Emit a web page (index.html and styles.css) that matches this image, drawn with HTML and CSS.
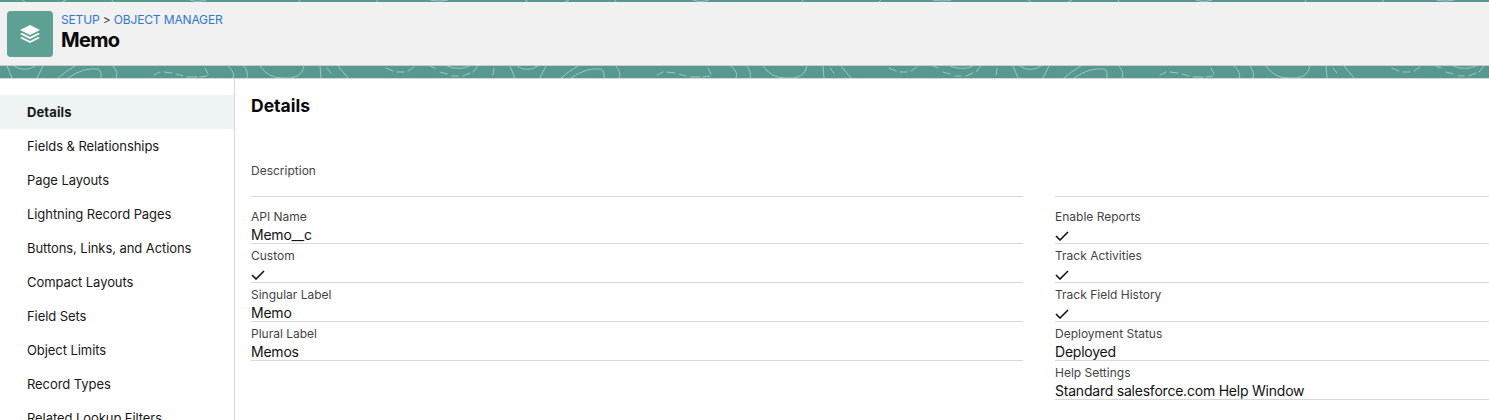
FILE: index.html
```html
<!DOCTYPE html>
<html lang="en">
<head>
  <meta charset="UTF-8">
  <meta name="viewport" content="width=device-width, initial-scale=1.0">
  <title>Memo | Object Manager</title>
  <link rel="stylesheet" href="styles.css">
</head>
<body>
  <!-- Header -->
  <header class="banner">
    <svg class="banner-art" width="100%" height="78" aria-hidden="true">
      <defs>
        <pattern id="swirls" width="503" height="78" patternUnits="userSpaceOnUse">
          <g fill="none" stroke="#a6cdc6" stroke-width="0.9" stroke-linecap="round">
            <path d="M7 66l5 12"/>
            <path d="M14 66q10 7 21 0"/>
            <path d="M43 66l-6 12"/>
            <path d="M58 78q8-7 17-12"/>
            <path d="M68 78q16-11 30-9q4 2 3 9"/>
            <path d="M113 66q6 7 3 12"/>
            <path d="M154 75l6-3"/>
            <path d="M164 72l8 1"/>
            <path d="M176 74l7 2"/>
            <path d="M187 77l10 0"/>
            <path d="M200 77l7-1"/>
            <path d="M205 68l3 6"/>
            <path d="M228 66q8 7 5 12"/>
            <path d="M244 66q5 7 3 12"/>
            <path d="M260 66q8 12 22 12q20 2 22-12"/>
            <path d="M320 66l1 12"/>
            <path d="M327 68l4 5"/>
            <path d="M338 66l10 12"/>
            <path d="M386 68l7 3"/>
            <path d="M397 72l7 0"/>
            <path d="M408 71l6-4"/>
            <path d="M430 66l5 2"/>
            <path d="M440 72l7 2"/>
            <path d="M452 76l6 0"/>
            <path d="M463 76l7-3"/>
            <path d="M473 72l5-6"/>
            <path d="M447 66q12 5 23 0"/>
            <path d="M494 68l-1 7"/>
            <path d="M22 0l3 2"/>
            <path d="M62 2l4-2"/>
            <path d="M112 0l1 2"/>
            <path d="M190 0q8 3 16 0"/>
            <path d="M300 0l-1 2"/>
            <path d="M376 2l2-2"/>
            <path d="M430 0q10 2 18 0"/>
          </g>
        </pattern>
      </defs>
      <rect width="100%" height="78" fill="url(#swirls)"/>
    </svg>
    <div class="banner-panel">
      <div class="object-icon">
        <svg width="20" height="18" viewBox="0 0 20 18" aria-hidden="true">
          <path fill="#fff" d="M10 0l10 5-10 5L0 5z"/>
          <path fill="#fff" d="M0 9l2-1 8 4 8-4 2 1-10 5z"/>
          <path fill="#fff" d="M0 13l2-1 8 4 8-4 2 1-10 5z"/>
        </svg>
      </div>
      <div class="object-title">
        <div class="crumbs"><a href="#setup">SETUP</a> &gt; <a href="#manager">OBJECT MANAGER</a></div>
        <h1>Memo</h1>
      </div>
    </div>
  </header>

  <div class="layout">
    <!-- Sidebar -->
    <nav class="sidebar">
      <a class="active" href="#details">Details</a>
      <a href="#fields">Fields &amp; Relationships</a>
      <a href="#layouts">Page Layouts</a>
      <a href="#lightning">Lightning Record Pages</a>
      <a href="#buttons">Buttons, Links, and Actions</a>
      <a href="#compact">Compact Layouts</a>
      <a href="#sets">Field Sets</a>
      <a href="#limits">Object Limits</a>
      <a href="#types">Record Types</a>
      <a href="#filters">Related Lookup Filters</a>
    </nav>

    <!-- Details -->
    <main class="content">
      <h2>Details</h2>
      <div class="fields">
        <div class="field field-top"><span class="label">Description</span></div>
        <div class="field field-top"></div>
        <div class="column">
          <div class="field"><span class="label">API Name</span><span class="value">Memo__c</span></div>
          <div class="field"><span class="label">Custom</span><span class="value"><svg class="check" viewBox="0 0 14 10"><path d="M1 5l4 4 8-8"/></svg></span></div>
          <div class="field"><span class="label">Singular Label</span><span class="value">Memo</span></div>
          <div class="field"><span class="label">Plural Label</span><span class="value">Memos</span></div>
        </div>
        <div class="column">
          <div class="field"><span class="label">Enable Reports</span><span class="value"><svg class="check" viewBox="0 0 14 10"><path d="M1 5l4 4 8-8"/></svg></span></div>
          <div class="field"><span class="label">Track Activities</span><span class="value"><svg class="check" viewBox="0 0 14 10"><path d="M1 5l4 4 8-8"/></svg></span></div>
          <div class="field"><span class="label">Track Field History</span><span class="value"><svg class="check" viewBox="0 0 14 10"><path d="M1 5l4 4 8-8"/></svg></span></div>
          <div class="field"><span class="label">Deployment Status</span><span class="value">Deployed</span></div>
          <div class="field"><span class="label">Help Settings</span><span class="value">Standard salesforce.com Help Window</span></div>
        </div>
      </div>
    </main>
  </div>
</body>
</html>
```

FILE: styles.css
```css
html, body {
  height: 100%;
  overflow: hidden;
}
body {
  margin: 0;
  display: flex;
  flex-direction: column;
  font-family: Inter, "Liberation Sans", sans-serif;
  background-color: #fff;
  color: #111;
}
/* Header */
.banner {
  position: relative;
  flex: none;
  height: 79px;
  padding-top: 2px;
  box-sizing: border-box;
  background-color: #57988f;
  border-bottom: 1px solid #d8d8d8;
}
.banner-art {
  position: absolute;
  top: 0;
  left: 0;
}
.banner-panel {
  position: relative;
  display: flex;
  align-items: center;
  gap: 8px;
  height: 64px;
  box-sizing: border-box;
  padding: 0 7px;
  background-color: #f1f1f1;
  border-bottom: 1px solid #ccc;
}
.object-icon {
  display: flex;
  align-items: center;
  justify-content: center;
  width: 46px;
  height: 46px;
  border-radius: 4px;
  background-color: #5ca194;
}
.object-title {
  display: flex;
  flex-direction: column;
  margin-top: -3px;
}
.crumbs {
  font-size: 12px;
  line-height: 16px;
  letter-spacing: -0.15px;
  color: #444;
}
.crumbs a {
  color: #2f77d4;
  text-decoration: none;
}
h1 {
  margin: 0;
  font-size: 20px;
  line-height: 25px;
  font-weight: 700;
  letter-spacing: -0.7px;
  color: #080808;
}
/* Sidebar */
.layout {
  flex: 1;
  display: flex;
  min-height: 0;
}
.sidebar {
  flex: none;
  display: flex;
  flex-direction: column;
  width: 234px;
  padding-top: 16px;
  border-right: 1px solid #d8d8d8;
}
.sidebar a {
  flex: none;
  height: 34px;
  line-height: 34px;
  padding-left: 27px;
  font-size: 13px;
  letter-spacing: -0.07px;
  color: #181818;
  text-decoration: none;
}
.sidebar a.active {
  background-color: #edf4f3;
  font-weight: 700;
  letter-spacing: 0.1px;
}
/* Details */
.content {
  flex: 1;
  min-width: 0;
  padding-left: 16px;
}
h2 {
  margin: 16px 0 0;
  height: 24px;
  font-size: 17.5px;
  line-height: 22px;
  font-weight: 700;
  color: #080808;
}
.fields {
  display: grid;
  grid-template-columns: 772px 1fr;
  column-gap: 32px;
  margin-top: 38px;
}
.field {
  display: flex;
  flex-direction: column;
  height: 39px;
  padding-top: 3px;
  box-sizing: border-box;
  border-bottom: 1px solid #d8d8d8;
}
.field-top {
  height: 40px;
  padding-top: 5px;
  margin-bottom: 8px;
}
.label {
  height: 19px;
  font-size: 12px;
  line-height: 18px;
  color: #444;
}
.value {
  height: 16px;
  font-size: 14px;
  line-height: 16px;
  letter-spacing: -0.22px;
  color: #111;
}
.check {
  display: block;
  width: 14px;
  height: 10px;
  margin-top: 4px;
  fill: none;
  stroke: #111;
  stroke-width: 1.6;
}
```
